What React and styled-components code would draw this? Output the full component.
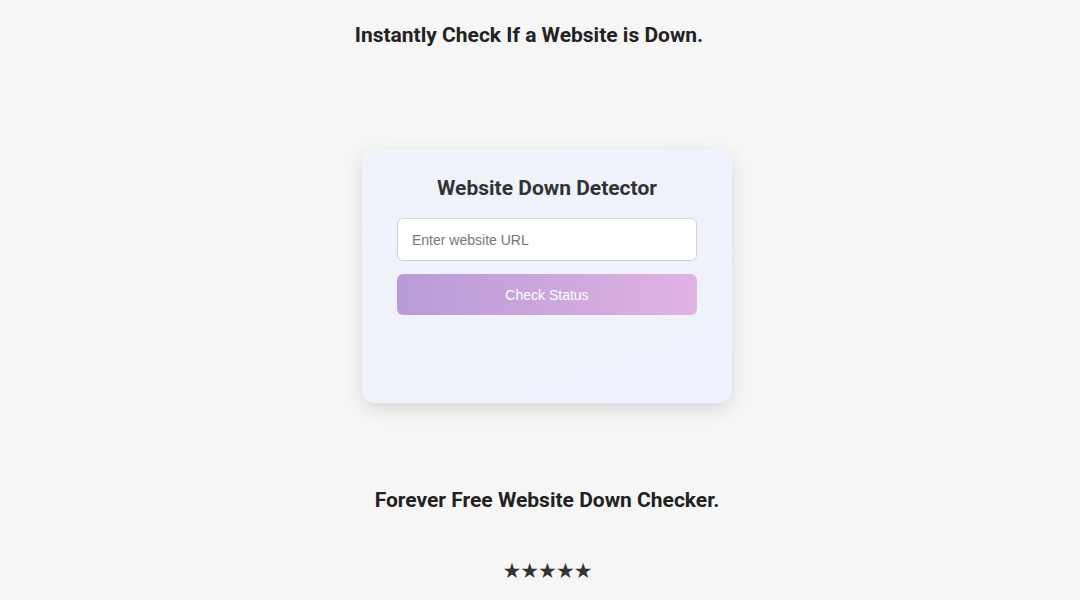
import styled, { createGlobalStyle } from "styled-components";

const GlobalStyle = createGlobalStyle`
  body {
    margin: 0;
    background-color: #f6f6f6;
    font-family: Roboto, "Liberation Sans", sans-serif;
  }
`;

const StyledPage = styled.div`
  display: flex;
  flex-direction: column;
  align-items: center;
  padding: 23px 0 0 14px;
  min-height: 600px;
  box-sizing: border-box;
`;

const Heading = styled.h2`
  margin: 0;
  align-self: stretch;
  text-align: center;
  font-size: 21px;
  line-height: 24px;
  font-weight: 700;
  color: #222;
  padding-right: ${(props) => props.$shift || 0}px;
  margin-top: ${(props) => props.$top || 0}px;
`;

const Card = styled.div`
  width: 370px;
  box-sizing: border-box;
  margin-top: 102px;
  padding: 27px 35px 88px;
  border-radius: 14px;
  background: linear-gradient(160deg, #f1f3fb 0%, #eef2fc 100%);
  box-shadow: 0 6px 18px rgba(0, 0, 0, 0.12);
  display: flex;
  flex-direction: column;

  & > .card__title {
    margin: 0 0 18px;
    text-align: center;
    font-size: 21px;
    line-height: 24px;
    font-weight: 700;
    color: #333;
  }

  & > .card__input {
    height: 43px;
    box-sizing: border-box;
    border: 1px solid #d2d2d2;
    border-radius: 6px;
    padding: 0 14px;
    background: #fff;
    font-family: "Liberation Sans", Arial, sans-serif;
    font-size: 14px;
    color: #333;
    outline: none;

    &::placeholder {
      color: #777;
    }
  }

  & > .card__button {
    margin-top: 13px;
    height: 41px;
    border: none;
    border-radius: 6px;
    background: linear-gradient(90deg, #b89bd8 0%, #e1b2e2 100%);
    color: #fff;
    font-family: "Liberation Sans", Arial, sans-serif;
    font-size: 14px;
    cursor: pointer;
  }
`;

const Stars = styled.div`
  margin-top: 47px;
  font-family: "DejaVu Sans", sans-serif;
  font-size: 21px;
  line-height: 24px;
  letter-spacing: -1px;
  color: #333;
`;

function App() {
  return (
    <>
      <GlobalStyle />
      <StyledPage>
        <Heading $shift={36}>Instantly Check If a Website is Down.</Heading>
        <Card>
          <h1 className="card__title">Website Down Detector</h1>
          <input
            type="text"
            className="card__input"
            placeholder="Enter website URL"
          />
          <button className="card__button" type="button">
            Check Status
          </button>
        </Card>
        <Heading $top={85}>Forever Free Website Down Checker.</Heading>
        <Stars>★★★★★</Stars>
      </StyledPage>
    </>
  );
}

export default App;
